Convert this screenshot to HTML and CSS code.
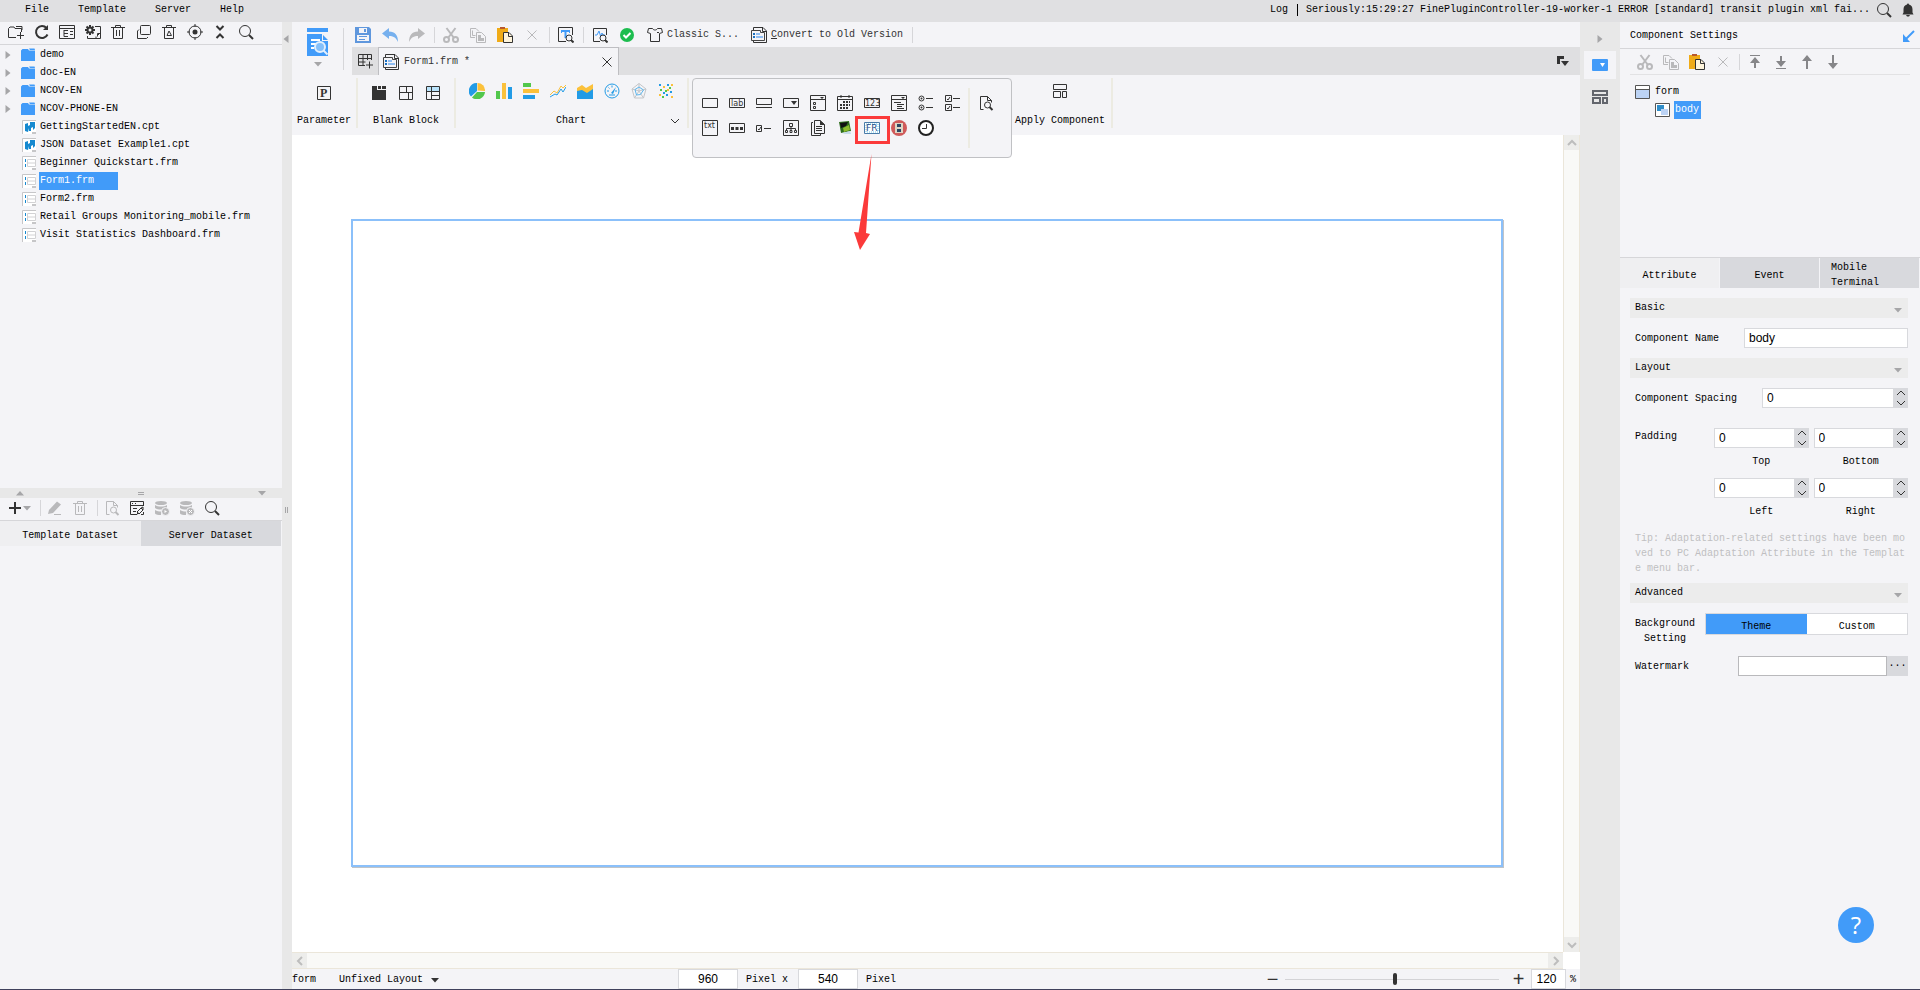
FILE: index.html
```html
<!DOCTYPE html>
<html lang="en">
<head>
    <meta charset="UTF-8">
    <meta name="viewport" content="width=device-width, initial-scale=1.0">
    <title>Form1.frm</title>
    <link rel="stylesheet" href="styles.css">
</head>
<body>
    <!-- icons -->
    <svg class="sprite" aria-hidden="true">
        <symbol id="folder-add" viewBox="0 0 16 16"><path d="M8 13.5H.5V4.500L2 3h4l1 1.500h6.500V8M8 2.500h6V6M9 11.500h7M12.500 8v7" class="ln"/></symbol>
        <symbol id="refresh" viewBox="0 0 16 16"><path d="M13.500 10.500A6 6 0 1 1 12.500 4" class="ln b"/><path d="M9 6h5V1z"/></symbol>
        <symbol id="rename" viewBox="0 0 16 16"><path d="M.5 1.500h15v13H.5zM.5 4.500h15M5 6v6.500M5 6.500h4M5 9.500h4M5 12.500h4M11 7.500h3M11 10.500h3" class="ln"/></symbol>
        <symbol id="gear-doc" viewBox="0 0 16 16"><circle cx="5" cy="6" r="2.500" class="ln b"/><path d="M5 1v2M5 9v2M0 6h2M8 6h2M1.500 2.500l1.500 1.500M8.500 2.500L7 4M1.500 9.500L3 8M8.500 9.500L7 8" class="ln b"/><path d="M10 2.500h5.500v12H2.500V12M10 14.500h1v-2M12.500 12.500v-3h3M12 12l3-3" class="ln"/></symbol>
        <symbol id="trash" viewBox="0 0 16 16"><path d="M1 3.500h14M5.500 3V1.500h5V3M3.500 4v10.500h9V4M6.500 6v6M9.500 6v6" class="ln"/></symbol>
        <symbol id="copy2" viewBox="0 0 16 16"><rect x="4.500" y="1.500" width="10" height="9" rx="1" class="ln"/><path d="M3 5.500L1.500 7v7.500h9L12 13" class="ln"/></symbol>
        <symbol id="recycle" viewBox="0 0 16 16"><path d="M1 3.500h14M5.500 3V1.500h5V3M3.500 4v10.500h9V4M6 11.500h4.500L8 7z" class="ln"/></symbol>
        <symbol id="target" viewBox="0 0 16 16"><circle cx="8" cy="8" r="6" class="ln"/><circle cx="8" cy="8" r="2.500"/><path d="M8 0v3M8 13v3M0 8h3M13 8h3" class="ln"/></symbol>
        <symbol id="collapse" viewBox="0 0 16 16"><path d="M4.500 2L8 5.500 11.500 2M4.500 14L8 10.500 11.500 14" class="ln b"/></symbol>
        <symbol id="search" viewBox="0 0 16 16"><circle cx="7" cy="7" r="5.500" class="ln"/><path d="M11 11l4 4" class="ln b"/></symbol>
        <symbol id="bell" viewBox="0 0 16 16"><path d="M8 1.500a1 1 0 0 1 1 1c2.500.5 3.500 2.500 3.500 5v3l1 2h-11l1-2v-3c0-2.500 1-4.500 3.500-5a1 1 0 0 1 1-1zM6 13h4l-1 1.500H7z"/></symbol>
        <symbol id="folder" viewBox="0 0 16 16"><path d="M1 3.500L2.500 2H8l1 1.500h6V14H1z" fill="#419bf9"/><path d="M9 1.500h5.500l.5 1.500h-5z" fill="#419bf9"/></symbol>
        <symbol id="cpt" viewBox="0 0 16 16"><path d="M1.500 15V1.500H15" fill="none" stroke="#c6c6c8"/><path d="M2 2h13v13H2z" fill="#fff"/><path d="M4 5l3-1v3l2-1V3h5v6l-2 2V8l-2 1v3H8V9l-1 4-3-1z" fill="#1589d0"/><path d="M11 13h4v2h-4z" fill="#c6c6c8"/></symbol>
        <symbol id="frm" viewBox="0 0 16 16"><path d="M1.500 15V1.500H15" fill="none" stroke="#c6c6c8"/><path d="M2 2h13v13H2z" fill="#fff"/><path d="M6.500 4.500h8v7h-8zM7 8h8" fill="none" stroke="#d2d2d4"/><path d="M4 4h1v3H4zM4 9h1v3H4z" fill="#1589d0"/><path d="M11 13h4v2h-4z" fill="#c6c6c8"/></symbol>
        <symbol id="plus" viewBox="0 0 16 16"><path d="M2 8h12M8 2v12" class="ln b"/></symbol>
        <symbol id="pencil" viewBox="0 0 16 16"><path d="M1 14l1-4 8-8.500 4 3L6 13zM7 14h7v1H7z"/></symbol>
        <symbol id="doc-search" viewBox="0 0 16 16"><path d="M5.500 14.500h-3v-13h7l4 4M9.500 1.500v4h4v2" class="ln"/><circle cx="9.500" cy="10" r="3" class="ln"/><path d="M11.500 12l3 3" class="ln b"/></symbol>
        <symbol id="db-edit" viewBox="0 0 16 16"><path d="M8 14.500H1.500v-13h13V6M1.500 5.500h13M4 8.500h4M4 11.500h3M3 3.500h1M6 3.500h1" class="ln"/><path d="M8 12l4-4 2 2-4 4zM12 8l2-1v3M8 14.500l1-2M14.500 12v2.500H12" class="ln"/></symbol>
        <symbol id="db" viewBox="0 0 16 16"><ellipse cx="7" cy="3" rx="6" ry="2"/><path d="M1 5c3 2 9 2 12 0v3c-3 2-9 2-12 0zM1 10c2 1.500 4 1.500 6 1.500V15c-3 0-5-.5-6-1.500z"/><circle cx="11.500" cy="11.500" r="4" stroke="#f4f4f7"/><path d="M10.500 10l2.500 1.500-2.500 1.500z" fill="#fff"/></symbol>
        <symbol id="db-x" viewBox="0 0 16 16"><ellipse cx="7" cy="3" rx="6" ry="2"/><path d="M1 5c3 2 9 2 12 0v3c-3 2-9 2-12 0zM1 10c2 1.500 4 1.500 6 1.500V15c-3 0-5-.5-6-1.500z"/><circle cx="11.500" cy="11.500" r="4" stroke="#f4f4f7"/><path d="M10 10l3 3M13 10l-3 3" stroke="#fff"/></symbol>
        <symbol id="save" viewBox="0 0 16 16"><path d="M0 0h14l2 2v14H0z" fill="#5f97dd"/><path d="M4 1h8v5H4z" fill="#f4f4f7"/><path d="M9 2h2v3H9zM3 9h10v1H3zM3 12h7v1H3z" fill="#5f97dd"/><path d="M2 8h12v6H2z" fill="#f4f4f7"/><path d="M4 9h8v1H4zM4 12h6v1H4z" fill="#5f97dd"/></symbol>
        <symbol id="undo" viewBox="0 0 16 16"><path d="M0 6.500L7 1v3.500c6 0 9 4 9 10.500-2-4.500-5-6-9-6V12z"/></symbol>
        <symbol id="redo" viewBox="0 0 16 16"><path d="M16 6.500L9 1v3.500C3 4.500 0 8.500 0 15c2-4.500 5-6 9-6v3z"/></symbol>
        <symbol id="cut" viewBox="0 0 16 16"><circle cx="3.500" cy="12.500" r="2.500" class="ln b"/><circle cx="12.500" cy="12.500" r="2.500" class="ln b"/><path d="M3.500 1L11 11M12.500 1L5 11" class="ln b"/></symbol>
        <symbol id="copy" viewBox="0 0 16 16"><path d="M5 10.500H.5V1.500H6l3 3M2.500 3.500v5h3" class="ln"/><path d="M6.500 5.500h5l4 4v6h-9z" class="ln"/><path d="M8 8h3v3h3v3H8z"/></symbol>
        <symbol id="paste" viewBox="0 0 16 16"><path d="M0 1h11v5H6v9H0z" fill="#f0ab17"/><path d="M3 0h5v2H3z" fill="#b9582e"/><path d="M6.500 5.500h5.500l3.500 3.500v6.500h-9z" fill="#fff5dc" stroke="#333"/><path d="M11.500 5.500v4h4" fill="none" stroke="#333"/></symbol>
        <symbol id="cross" viewBox="0 0 16 16"><path d="M3.500 3.500l9 9M12.500 3.500l-9 9" class="ln"/></symbol>
        <symbol id="text-search" viewBox="0 0 16 16"><path d="M8 14.500H.5V.5h14V8" class="ln"/><path d="M3 3h9v3h-1V5H8.500v6h-2V5H4v1H3z" fill="#419bf9"/><circle cx="11" cy="11" r="3" class="ln"/><path d="M13 13l2.500 2.500" class="ln b"/></symbol>
        <symbol id="pulse" viewBox="0 0 16 16"><path d="M8 14.500H1.500v-13h13V8" class="ln"/><path d="M3 8h2l2-4 1.500 5L10 6l1 2h2" fill="none" stroke="#419bf9"/><circle cx="11" cy="11" r="3" class="ln"/><path d="M13 13l2.500 2.500" class="ln b"/></symbol>
        <symbol id="check" viewBox="0 0 16 16"><circle cx="8" cy="8" r="7" fill="#1dbd4f"/><path d="M4.500 8l2.500 2.500L11.500 6" fill="none" stroke="#fff" stroke-width="2"/></symbol>
        <symbol id="shirt" viewBox="0 0 16 16"><path d="M5.500 1.500c1 2 4 2 5 0h4l1 4-3 1v8h-9v-8l-3-1 1-4zM10 5.500h2" class="ln"/></symbol>
        <symbol id="form-doc" viewBox="0 0 16 16"><path d="M2.500 3V.5H12l3.500 3.500v11.500H2.500V14M11.500.5v4h4" class="ln"/><path d="M.5 3.500h9v2h4v8H.5z" fill="#f4f4f7" stroke="#444"/><path d="M2 6h2v2H2zM2 9h2v2H2z" fill="#1a70c0"/><path d="M5 6h4v2H5zM5 9h7v2H5z" fill="#8fbdf2"/></symbol>
        <symbol id="grid-add" viewBox="0 0 16 16"><path d="M8 12.500H1.500v-11h13V7M1.500 5.500h13M1.500 9h7M6 1.500v11M10.500 1.500V7M9 12h7M12.500 8.500v7" class="ln"/></symbol>
        <symbol id="report" viewBox="0 0 22 28"><path d="M0 0h21v4H0zM0 6h15v7h6v15H0zM16 7l5 5h-5z" fill="#419bf9"/><path d="M4 11h9v2H4zM4 15h5v2H4zM4 19h3v2H4z" fill="#fff"/><circle cx="13" cy="19" r="5" fill="#85c0fa" stroke="#e2effd" stroke-width="2"/><path d="M16.500 22.500l4 4" stroke="#e2effd" stroke-width="2"/></symbol>
        <symbol id="param" viewBox="0 0 16 16"><path d="M1.500 1.500h13v13h-13z" class="ln"/><text x="4" y="12" font-family="Liberation Serif, serif" font-size="12" font-weight="bold">P</text></symbol>
        <symbol id="block1" viewBox="0 0 16 16"><path d="M1 1h5v4h9v10H1zM7 1h3v3H7zM11 1h4v3h-4z"/></symbol>
        <symbol id="block2" viewBox="0 0 16 16"><path d="M1.500 1.500h13v13h-13zM1.500 7.500h13M8.500 1.500v6M10.500 7.500v7" class="ln"/></symbol>
        <symbol id="block3" viewBox="0 0 16 16"><path d="M2 2h12v4H2z" fill="#b9e3fb"/><path d="M1.500 1.500h13v13h-13zM1.500 6.500h13M6.500 1.500v13M6.500 10.500h8" class="ln"/></symbol>
        <symbol id="pie" viewBox="0 0 16 16"><path d="M8 8V0a8 8 0 0 0-6 13.500z" fill="#229be6"/><path d="M8.500 7.500V0a7.500 7.500 0 0 1 7.500 8z" fill="#fbc13b"/><path d="M8 9h8a8 8 0 0 1-13 5.500z" fill="#52c74c"/></symbol>
        <symbol id="bars" viewBox="0 0 16 16"><path d="M0 8h4v8H0z" fill="#52c74c"/><path d="M6 0h4v16H6z" fill="#fbc13b"/><path d="M12 4h4v12h-4z" fill="#229be6"/></symbol>
        <symbol id="hbars" viewBox="0 0 16 16"><path d="M0 0h8v4H0z" fill="#52c74c"/><path d="M0 6h16v4H0z" fill="#fbc13b"/><path d="M0 12h12v4H0z" fill="#229be6"/></symbol>
        <symbol id="line" viewBox="0 0 16 16"><path d="M0 12l4-4 3 2 4-7 2 2 3-3" fill="none" stroke="#fbc13b"/><path d="M0 14l5-3 2 1 4-6 2 3 3-5" fill="none" stroke="#229be6"/></symbol>
        <symbol id="area" viewBox="0 0 16 16"><path d="M0 5l5-3 4 3 7-4v10H0z" fill="#fbc13b"/><path d="M0 8l5-1 5 3 6-4v10H0z" fill="#229be6"/></symbol>
        <symbol id="gauge" viewBox="0 0 16 16"><circle cx="8" cy="8" r="7" fill="none" stroke="#229be6"/><path d="M8 2.500v2M3 8h2M11 8h2M4.500 4.500l1 1M5 12h6" stroke="#229be6"/><path d="M7 10l5-6-3 7z" fill="#229be6"/></symbol>
        <symbol id="radar" viewBox="0 0 16 16"><path d="M8 .5l7 5.500-2.500 9h-9L1 6zM8 .5V8l7-2M8 8l4.500 7M8 8l-4.500 7M8 8L1 6" fill="none" stroke="#c4c6c9"/><path d="M8 4l4.500 3-3 4.500-4 .5L4 6.500z" fill="none" stroke="#5ab6ee"/></symbol>
        <symbol id="scatter" viewBox="0 0 16 16"><path d="M1 1h2v2H1zM5 9h2v2H5zM9 1h2v2H9zM12 8h2v2h-2zM8 11h2v2H8z" fill="#229be6"/><path d="M5 3h2v2H5zM13 1h2v2h-2zM9 6h2v2H9zM1 11h2v2H1zM13 13h2v2h-2z" fill="#fbc13b"/><path d="M2 6h2v2H2zM11 4h2v2h-2zM4 13h2v2H4zM7 7h2v2H7z" fill="#52c74c"/></symbol>
        <symbol id="w-text" viewBox="0 0 16 16"><path d="M.5 3.500h15v9H.5z" class="ln"/></symbol>
        <symbol id="w-label" viewBox="0 0 16 16"><path d="M.5 3.500h15v9H.5z" class="ln"/><text x="2" y="11" font-family="DejaVu Sans, sans-serif" font-size="8">lab</text></symbol>
        <symbol id="w-button" viewBox="0 0 16 16"><path d="M.5 3.500h15v6H.5zM0 12.500h16" class="ln"/></symbol>
        <symbol id="w-combo" viewBox="0 0 16 16"><path d="M.5 3.500h15v9H.5z" class="ln"/><path d="M8 6h6l-3 4z"/></symbol>
        <symbol id="w-check-combo" viewBox="0 0 16 16"><path d="M.5.5h15v15H.5zM.5 4.500h15M3.500 7.500h2v2h-2zM3.500 11.500h2v2h-2z" class="ln"/><path d="M10 2h4l-2 2z"/></symbol>
        <symbol id="w-date" viewBox="0 0 16 16"><path d="M.5 1.500h15v14H.5zM.5 4.500h15M4 0v3M12 0v3" class="ln"/><path d="M3 10h10M3 13h9M6 7h7" class="ln b" stroke-dasharray="2 1"/></symbol>
        <symbol id="w-number" viewBox="0 0 16 16"><path d="M.5 3.500h15v9H.5z" class="ln"/><text x="1" y="11" font-family="DejaVu Sans, sans-serif" font-size="8">123</text></symbol>
        <symbol id="w-tree-combo" viewBox="0 0 16 16"><path d="M.5.500h15v15H.5zM.5 4.500h15M3 7.500h7M6 9.500h7M6 11.500h5M6 13.500h7" class="ln"/><path d="M10 2h4l-2 2z"/></symbol>
        <symbol id="w-radio" viewBox="0 0 16 16"><circle cx="3.500" cy="3.500" r="2.500" class="ln"/><circle cx="3.500" cy="12.500" r="2.500" class="ln"/><circle cx="3.500" cy="3.500" r="1"/><circle cx="3.500" cy="12.500" r="1"/><path d="M8 3.500h7M8 12.500h7" class="ln"/></symbol>
        <symbol id="w-checks" viewBox="0 0 16 16"><path d="M.5.500h6v6h-6zM.5 9.500h6v6h-6zM2 4l1 1 2-3M2 13l1 1 2-3M8 3.500h7M8 12.500h7" class="ln"/></symbol>
        <symbol id="w-area" viewBox="0 0 16 16"><path d="M.5.500h15v15H.5z" class="ln"/><text x="2" y="8" font-family="DejaVu Sans, sans-serif" font-size="8">txt</text></symbol>
        <symbol id="w-pass" viewBox="0 0 16 16"><path d="M.5 3.500h15v9H.5z" class="ln"/><path d="M2 7h3v3H2zM6.500 7h3v3h-3zM11 7h3v3h-3z"/></symbol>
        <symbol id="w-check" viewBox="0 0 16 16"><path d="M.5 5.500h5v6h-5zM2 9l1 1 2-3M8 8.500h7" class="ln"/></symbol>
        <symbol id="w-tree" viewBox="0 0 16 16"><path d="M.5.500h15v15H.5zM6.500 3.500h3v3h-3zM8 6.500v4M3.500 11V8.500h9V11M2.500 10.500h2v2h-2zM7 10.500h2v2H7zM11.500 10.500h2v2h-2z" class="ln"/></symbol>
        <symbol id="w-copy" viewBox="0 0 16 16"><path d="M3 2.500H1.500v13h9V14M4.500.500H10l4.500 4v9h-10zM6 6.500h6M6 8.500h6M6 10.500h6" class="ln"/><path d="M10 0l5 5h-5z"/></symbol>
        <symbol id="w-image" viewBox="0 0 16 16"><path d="M2 2l10-1 2 10-10 2z" fill="#2e6e1d"/><path d="M3 3l8-1-2 4-5 2z" fill="#111"/><path d="M6 8l6-3 1 5-6 2z" fill="#8dbb2c"/><path d="M5 13l8-2 1 3H8z" fill="#c6dbe8"/></symbol>
        <symbol id="w-fr" viewBox="0 0 16 16"><path d="M.5 2.500h15v11H.5z" fill="#fff" stroke="#497ba8"/><path d="M2 4h12v8H2z" fill="none" stroke="#6fc4e4" stroke-dasharray="1 1"/><text x="2" y="11" font-family="DejaVu Sans, sans-serif" font-size="9" fill="#184a86">FR</text></symbol>
        <symbol id="w-media" viewBox="0 0 16 16"><circle cx="8" cy="8" r="8" fill="#cf5b5b"/><path d="M4 3h8v10H4z" fill="#ddd6c4"/><path d="M6 4h4v3H6zM6 9h4v3H6z" fill="#2c4664"/></symbol>
        <symbol id="w-clock" viewBox="0 0 16 16"><circle cx="8" cy="8" r="7" fill="#fff" stroke="#222" stroke-width="2"/><path d="M8.500 4v4.500H4" class="ln"/></symbol>
        <symbol id="layout" viewBox="0 0 16 16"><path d="M1.500 1.500h13v5h-13zM1.500 8.500h7v6h-7zM10.500 8.500h4v6h-4z" class="ln"/></symbol>
        <symbol id="layout-bold" viewBox="0 0 16 16"><path d="M1 2h14v4H1zM1 9h7v5H1zM11 9h4v5h-4z" class="ln b"/></symbol>
        <symbol id="blue-tab" viewBox="0 0 16 16"><rect y="2" width="16" height="12" rx="1" fill="#419bf9"/><path d="M8 6h5l-2.500 4z" fill="#fff"/></symbol>
        <symbol id="tabs-list" viewBox="0 0 16 16"><path d="M2 3h7v3H5v5H2z"/><path d="M6 8h8l-4 5z"/></symbol>
        <symbol id="dock" viewBox="0 0 16 16"><path d="M14 3l-9 9" stroke="#419bf9" stroke-width="2"/><path d="M3 6v8h7z" fill="#419bf9"/></symbol>
        <symbol id="to-top" viewBox="0 0 16 16"><path d="M3 1h10v1H3zM8 3l5 6H9v5H7V9H3z"/></symbol>
        <symbol id="to-bottom" viewBox="0 0 16 16"><path d="M3 14h10v1H3zM8 13l5-6H9V2H7v5H3z"/></symbol>
        <symbol id="up" viewBox="0 0 16 16"><path d="M8 1l5 6H9v8H7V7H3z"/></symbol>
        <symbol id="down" viewBox="0 0 16 16"><path d="M8 15l5-6H9V1H7v8H3z"/></symbol>
        <symbol id="form" viewBox="0 0 16 16"><path d="M.5 1.500h14v13H.5z" fill="#bcd3f5" stroke="#555"/><path d="M1 2h13v3H1z" fill="#fff"/><path d="M1 5.500h13" stroke="#555"/></symbol>
        <symbol id="body" viewBox="0 0 16 16"><path d="M.5 1.500h14v13H.5z" fill="#fff" stroke="#555"/><path d="M2 3h7v6H2z" fill="#2f8dc9"/><path d="M6 7h7v6H6z" fill="#bcd3f5"/></symbol>
        <symbol id="chev-down" viewBox="0 0 10 10"><path d="M1 3l4 4 4-4" class="ln"/></symbol>
        <symbol id="chev-up" viewBox="0 0 10 10"><path d="M1 7l4-4 4 4" class="ln"/></symbol>
        <symbol id="bar-down" viewBox="0 0 10 10"><path d="M1 3l4 4 4-4" class="ln b"/></symbol>
        <symbol id="bar-up" viewBox="0 0 10 10"><path d="M1 7l4-4 4 4" class="ln b"/></symbol>
        <symbol id="bar-left" viewBox="0 0 10 10"><path d="M7 1L3 5l4 4" class="ln b"/></symbol>
        <symbol id="bar-right" viewBox="0 0 10 10"><path d="M3 1l4 4-4 4" class="ln b"/></symbol>
        <symbol id="tri-down" viewBox="0 0 8 8"><path d="M0 2h8L4 6.500z"/></symbol>
        <symbol id="tri-up" viewBox="0 0 8 8"><path d="M0 6.500h8L4 2z"/></symbol>
        <symbol id="tri-left" viewBox="0 0 8 8"><path d="M6.500 0v8L1.500 4z"/></symbol>
        <symbol id="tri-right" viewBox="0 0 8 8"><path d="M1.500 0v8l5-4z"/></symbol>
    </svg>

    <!-- menu bar -->
    <header class="menubar">
        <nav>
            <a href="#">File</a>
            <a href="#">Template</a>
            <a href="#">Server</a>
            <a href="#">Help</a>
        </nav>
        <div class="log">
            <span class="log-name">Log</span>
            <span class="log-msg">Seriously:15:29:27 FinePluginController-19-worker-1 ERROR [standard] transit plugin xml fai...</span>
            <button aria-label="Search"><svg><use href="#search"/></svg></button>
            <button aria-label="Messages"><svg><use href="#bell"/></svg></button>
        </div>
    </header>

    <div class="main">
        <!-- templates and datasets -->
        <aside class="left">
            <div class="tools file-tools">
                <button aria-label="New folder"><svg><use href="#folder-add"/></svg></button>
                <button aria-label="Refresh"><svg><use href="#refresh"/></svg></button>
                <button aria-label="Rename"><svg><use href="#rename"/></svg></button>
                <button aria-label="Manage"><svg><use href="#gear-doc"/></svg></button>
                <button aria-label="Delete"><svg><use href="#trash"/></svg></button>
                <button aria-label="Copy"><svg><use href="#copy2"/></svg></button>
                <button aria-label="Recycle bin"><svg><use href="#recycle"/></svg></button>
                <button aria-label="Locate"><svg><use href="#target"/></svg></button>
                <button aria-label="Collapse"><svg><use href="#collapse"/></svg></button>
                <button aria-label="Search"><svg><use href="#search"/></svg></button>
            </div>
            <ul class="tree">
                <li class="dir"><svg class="tri"><use href="#tri-right"/></svg><svg><use href="#folder"/></svg><span>demo</span></li>
                <li class="dir"><svg class="tri"><use href="#tri-right"/></svg><svg><use href="#folder"/></svg><span>doc-EN</span></li>
                <li class="dir"><svg class="tri"><use href="#tri-right"/></svg><svg><use href="#folder"/></svg><span>NCOV-EN</span></li>
                <li class="dir"><svg class="tri"><use href="#tri-right"/></svg><svg><use href="#folder"/></svg><span>NCOV-PHONE-EN</span></li>
                <li><svg><use href="#cpt"/></svg><span>GettingStartedEN.cpt</span></li>
                <li><svg><use href="#cpt"/></svg><span>JSON Dataset Example1.cpt</span></li>
                <li><svg><use href="#frm"/></svg><span>Beginner Quickstart.frm</span></li>
                <li><svg><use href="#frm"/></svg><span class="on">Form1.frm</span></li>
                <li><svg><use href="#frm"/></svg><span>Form2.frm</span></li>
                <li><svg><use href="#frm"/></svg><span>Retail Groups Monitoring_mobile.frm</span></li>
                <li><svg><use href="#frm"/></svg><span>Visit Statistics Dashboard.frm</span></li>
            </ul>
            <div class="splitter">
                <svg class="tri"><use href="#tri-up"/></svg>
                <i></i>
                <svg class="tri"><use href="#tri-down"/></svg>
            </div>
            <div class="tools data-tools">
                <button class="add" aria-label="Add dataset"><svg><use href="#plus"/></svg><svg class="tri"><use href="#tri-down"/></svg></button>
                <hr>
                <button class="off" aria-label="Edit"><svg><use href="#pencil"/></svg></button>
                <button class="off" aria-label="Delete"><svg><use href="#trash"/></svg></button>
                <hr>
                <button class="off" aria-label="Preview"><svg><use href="#doc-search"/></svg></button>
                <button aria-label="Connection"><svg><use href="#db-edit"/></svg></button>
                <button class="off" aria-label="Run"><svg><use href="#db"/></svg></button>
                <button class="off" aria-label="Stop"><svg><use href="#db-x"/></svg></button>
                <button aria-label="Search"><svg><use href="#search"/></svg></button>
            </div>
            <div class="data-tabs">
                <button class="cur">Template Dataset</button>
                <button>Server Dataset</button>
            </div>
        </aside>
        <div class="left-bar"><svg class="tri"><use href="#tri-left"/></svg><i></i></div>

        <!-- designer -->
        <section class="center">
            <div class="top">
                <button class="preview" aria-label="Preview"><svg class="report"><use href="#report"/></svg><svg class="tri"><use href="#tri-down"/></svg></button>
                <div class="top-right">
                    <div class="tools edit-tools">
                        <button aria-label="Save"><svg><use href="#save"/></svg></button>
                        <button class="undo" aria-label="Undo"><svg><use href="#undo"/></svg></button>
                        <button class="off" aria-label="Redo"><svg><use href="#redo"/></svg></button>
                        <hr>
                        <button class="off" aria-label="Cut"><svg><use href="#cut"/></svg></button>
                        <button class="off" aria-label="Copy"><svg><use href="#copy"/></svg></button>
                        <button aria-label="Paste"><svg><use href="#paste"/></svg></button>
                        <button class="off" aria-label="Delete"><svg><use href="#cross"/></svg></button>
                        <hr>
                        <button aria-label="Find text"><svg><use href="#text-search"/></svg></button>
                        <hr>
                        <button aria-label="Monitor"><svg><use href="#pulse"/></svg></button>
                        <button aria-label="Check"><svg><use href="#check"/></svg></button>
                        <button class="txt"><svg><use href="#shirt"/></svg>Classic S...</button>
                        <button class="txt"><svg><use href="#form-doc"/></svg><span><u>C</u>onvert to Old Version</span></button>
                        <hr>
                    </div>
                    <div class="file-tabs">
                        <button class="new" aria-label="New template"><svg><use href="#grid-add"/></svg></button>
                        <div class="file-tab"><svg><use href="#form-doc"/></svg><span>Form1.frm *</span><button aria-label="Close"><svg><use href="#cross"/></svg></button></div>
                        <button class="list" aria-label="Tab list"><svg><use href="#tabs-list"/></svg></button>
                    </div>
                </div>
            </div>
            <div class="ribbon">
                <div class="group g-param">
                    <div class="icons"><button aria-label="Parameter pane"><svg><use href="#param"/></svg></button></div>
                    <p>Parameter</p>
                </div>
                <div class="group g-block">
                    <div class="icons">
                        <button aria-label="Tab block"><svg><use href="#block1"/></svg></button>
                        <button aria-label="Absolute block"><svg><use href="#block2"/></svg></button>
                        <button aria-label="Report block"><svg><use href="#block3"/></svg></button>
                    </div>
                    <p>Blank Block</p>
                </div>
                <div class="group g-chart">
                    <div class="icons">
                        <button aria-label="Pie"><svg><use href="#pie"/></svg></button>
                        <button aria-label="Column"><svg><use href="#bars"/></svg></button>
                        <button aria-label="Bar"><svg><use href="#hbars"/></svg></button>
                        <button aria-label="Line"><svg><use href="#line"/></svg></button>
                        <button aria-label="Area"><svg><use href="#area"/></svg></button>
                        <button aria-label="Gauge"><svg><use href="#gauge"/></svg></button>
                        <button aria-label="Radar"><svg><use href="#radar"/></svg></button>
                        <button aria-label="Scatter"><svg><use href="#scatter"/></svg></button>
                    </div>
                    <p>Chart</p>
                    <svg class="more"><use href="#chev-down"/></svg>
                </div>
                <!-- widget pop-up -->
                <div class="slot">
                    <div class="popup">
                        <div class="widgets">
                            <button aria-label="Text"><svg><use href="#w-text"/></svg></button>
                            <button aria-label="Label"><svg><use href="#w-label"/></svg></button>
                            <button aria-label="Button"><svg><use href="#w-button"/></svg></button>
                            <button aria-label="Drop-down"><svg><use href="#w-combo"/></svg></button>
                            <button aria-label="Drop-down check box"><svg><use href="#w-check-combo"/></svg></button>
                            <button aria-label="Date"><svg><use href="#w-date"/></svg></button>
                            <button aria-label="Number"><svg><use href="#w-number"/></svg></button>
                            <button aria-label="Drop-down tree"><svg><use href="#w-tree-combo"/></svg></button>
                            <button aria-label="Radio group"><svg><use href="#w-radio"/></svg></button>
                            <button aria-label="Check box group"><svg><use href="#w-checks"/></svg></button>
                            <button aria-label="Text area"><svg><use href="#w-area"/></svg></button>
                            <button aria-label="Password"><svg><use href="#w-pass"/></svg></button>
                            <button aria-label="Check box"><svg><use href="#w-check"/></svg></button>
                            <button aria-label="Tree"><svg><use href="#w-tree"/></svg></button>
                            <button aria-label="File"><svg><use href="#w-copy"/></svg></button>
                            <button aria-label="Image"><svg><use href="#w-image"/></svg></button>
                            <button class="marked" aria-label="FR"><svg><use href="#w-fr"/></svg></button>
                            <button aria-label="Media"><svg><use href="#w-media"/></svg></button>
                            <button aria-label="Clock"><svg><use href="#w-clock"/></svg></button>
                        </div>
                        <button class="q" aria-label="Query"><svg><use href="#doc-search"/></svg></button>
                        <svg class="arrow" viewBox="0 0 20 96"><path d="M18.500 0L13 79l4 1L7 96 1 78l4.500.5z"/></svg>
                    </div>
                </div>
                <div class="group g-apply">
                    <div class="icons"><button aria-label="Component"><svg><use href="#layout"/></svg></button></div>
                    <p>Apply Component</p>
                </div>
            </div>
            <div class="work">
                <div class="canvas"><div class="form-body"></div></div>
                <div class="vscroll"><button aria-label="Up"><svg><use href="#bar-up"/></svg></button><button aria-label="Down"><svg><use href="#bar-down"/></svg></button></div>
                <div class="hscroll"><button aria-label="Left"><svg><use href="#bar-left"/></svg></button><button aria-label="Right"><svg><use href="#bar-right"/></svg></button></div>
            </div>
            <footer class="status">
                <span>form</span>
                <button class="layout-btn">Unfixed Layout<svg class="tri"><use href="#tri-down"/></svg></button>
                <div class="size">
                    <input type="text" id="pw" value="960"><label for="pw">Pixel x</label>
                    <input type="text" id="ph" value="540"><label for="ph">Pixel</label>
                </div>
                <div class="zoom">
                    <button aria-label="Zoom out">&minus;</button>
                    <input type="range" min="0" max="240" value="124" aria-label="Zoom">
                    <button aria-label="Zoom in">+</button>
                    <input type="text" id="zv" value="120"><label for="zv">%</label>
                </div>
            </footer>
        </section>

        <!-- side strip -->
        <div class="strip">
            <svg class="tri"><use href="#tri-right"/></svg>
            <button class="cur" aria-label="Component settings"><svg><use href="#blue-tab"/></svg></button>
            <button aria-label="Component library"><svg><use href="#layout-bold"/></svg></button>
        </div>

        <!-- component settings -->
        <aside class="right">
            <h2>Component Settings<svg><use href="#dock"/></svg></h2>
            <div class="tools comp-tools">
                <button class="off" aria-label="Cut"><svg><use href="#cut"/></svg></button>
                <button class="off" aria-label="Copy"><svg><use href="#copy"/></svg></button>
                <button aria-label="Paste"><svg><use href="#paste"/></svg></button>
                <button class="off" aria-label="Delete"><svg><use href="#cross"/></svg></button>
                <hr>
                <button class="mid" aria-label="To top"><svg><use href="#to-top"/></svg></button>
                <button class="mid" aria-label="To bottom"><svg><use href="#to-bottom"/></svg></button>
                <button class="mid" aria-label="Up"><svg><use href="#up"/></svg></button>
                <button class="mid" aria-label="Down"><svg><use href="#down"/></svg></button>
            </div>
            <ul class="comp-tree">
                <li><svg><use href="#form"/></svg><span>form</span></li>
                <li class="sub"><svg><use href="#body"/></svg><span class="on">body</span></li>
            </ul>
            <div class="attr-tabs">
                <button class="cur">Attribute</button>
                <button>Event</button>
                <button class="two">Mobile<br>Terminal</button>
            </div>
            <form class="attrs">
                <h3>Basic<svg class="tri"><use href="#tri-down"/></svg></h3>
                <div class="row"><label for="cname">Component Name</label><input class="name" type="text" id="cname" value="body"></div>
                <h3>Layout<svg class="tri"><use href="#tri-down"/></svg></h3>
                <div class="row"><label for="cspace">Component Spacing</label><div class="spin space"><input type="text" id="cspace" value="0"><span><svg><use href="#chev-up"/></svg><svg><use href="#chev-down"/></svg></span></div></div>
                <div class="row pad">
                    <span>Padding</span>
                    <div class="pad-grid">
                        <div><div class="spin"><input type="text" id="ptop" value="0"><span><svg><use href="#chev-up"/></svg><svg><use href="#chev-down"/></svg></span></div><label for="ptop">Top</label></div>
                        <div><div class="spin"><input type="text" id="pbottom" value="0"><span><svg><use href="#chev-up"/></svg><svg><use href="#chev-down"/></svg></span></div><label for="pbottom">Bottom</label></div>
                        <div><div class="spin"><input type="text" id="pleft" value="0"><span><svg><use href="#chev-up"/></svg><svg><use href="#chev-down"/></svg></span></div><label for="pleft">Left</label></div>
                        <div><div class="spin"><input type="text" id="pright" value="0"><span><svg><use href="#chev-up"/></svg><svg><use href="#chev-down"/></svg></span></div><label for="pright">Right</label></div>
                    </div>
                </div>
                <p class="tip">Tip: Adaptation-related settings have been moved to PC Adaptation Attribute in the Template menu bar.</p>
                <h3>Advanced<svg class="tri"><use href="#tri-down"/></svg></h3>
                <div class="row bg"><span>Background<br>Setting</span><div class="toggle"><button type="button" class="cur">Theme</button><button type="button">Custom</button></div></div>
                <div class="row mark"><label for="wm">Watermark</label><div class="pick"><input type="text" id="wm"><button type="button" aria-label="Choose">&middot;&middot;&middot;</button></div></div>
            </form>
            <button class="help">?</button>
        </aside>
    </div>
</body>
</html>
```
FILE: styles.css
```css
*{
    margin: 0;
    padding: 0;
    box-sizing: border-box;
}
body{
    height: 100vh;
    display: flex;
    flex-direction: column;
    overflow: hidden;
    border-bottom: 1px solid #3f415c;
    background-color: #f4f4f7;
    color: #000;
    font: 10px/14px "Liberation Mono", monospace;
}
ul{
    list-style: none;
}
a{
    color: #000;
    text-decoration: none;
}
button,input{
    font: inherit;
    color: inherit;
    border: none;
    background: none;
    border-radius: 0;
    outline: none;
}
svg{
    display: block;
    flex: none;
    width: 16px;
    height: 16px;
    fill: currentColor;
}
.sprite{
    display: none;
}
.ln{
    fill: none;
    stroke: currentColor;
}
.b{
    stroke-width: 2;
}
.tri{
    width: 8px;
    height: 8px;
    color: #a6a6a8;
}

/* menu bar */
.menubar{
    display: flex;
    justify-content: space-between;
    align-items: center;
    height: 22px;
    padding: 0 4px 2px 25px;
    background-color: #e0e0e2;
}
.menubar nav{
    display: flex;
    gap: 29px;
}
.log{
    display: flex;
    align-items: center;
    white-space: nowrap;
}
.log-name{
    padding-right: 9px;
    border-right: 1px solid #000;
    line-height: 12px;
}
.log-msg{
    padding: 0 4px 0 8px;
}
.log button{
    margin-left: 2px;
    color: #333;
}
.log button + button{
    margin-left: 8px;
}

.main{
    flex: 1;
    display: flex;
    min-height: 0;
}
.tools{
    display: flex;
    align-items: center;
    color: #333;
}
.tools hr{
    width: 1px;
    height: 16px;
    border: none;
    background-color: #d6d6d9;
}
.off{
    color: #b9b9bb;
}
.mid{
    color: #868689;
}

/* left panel */
.left{
    flex: none;
    width: 282px;
    display: flex;
    flex-direction: column;
}
.file-tools{
    justify-content: space-between;
    height: 23px;
    padding: 0 28px 2px 8px;
    border-bottom: 1px solid #d6d6d9;
}
.tree{
    height: 443px;
    padding-top: 1px;
}
.tree li{
    display: flex;
    align-items: center;
    height: 18px;
    padding-left: 21px;
}
.tree .dir{
    padding-left: 4px;
}
.dir .tri{
    margin-right: 8px;
}
.tree span{
    line-height: 18px;
    padding: 0 1px;
    margin-left: 2px;
}
.tree .dir span{
    margin-left: 3px;
}
.tree .on{
    width: 79px;
}
.on{
    background-color: #419bf9;
    color: #fff;
}
.splitter{
    display: flex;
    justify-content: space-between;
    align-items: center;
    height: 10px;
    padding: 0 16px;
    background-color: #e8e8e8;
}
.splitter i{
    width: 6px;
    height: 3px;
    border: solid #a6a6a8;
    border-width: 1px 0;
}
.data-tools{
    height: 23px;
    padding: 0 7px 2px;
    gap: 9px;
    border-bottom: 1px solid #d6d6d9;
}
.data-tools .add{
    display: flex;
    align-items: center;
}
.data-tools hr{
    margin: 0 -3px 0 0;
}
.data-tabs{
    display: grid;
    grid-template-columns: 1fr 1fr;
    padding-right: 1px;
}
.data-tabs button{
    height: 25px;
    padding-top: 5px;
    background-color: #d8d9dd;
}
.data-tabs .cur,.attr-tabs .cur{
    background-color: #efeff1;
}
.left-bar{
    flex: none;
    width: 10px;
    display: flex;
    flex-direction: column;
    align-items: center;
    padding: 13px 2px 0 0;
    background-color: #e8e8e8;
}
.left-bar i{
    width: 3px;
    height: 6px;
    margin-top: 464px;
    border: solid #a6a6a8;
    border-width: 0 1px;
}

/* designer */
.center{
    flex: 1;
    min-width: 0;
    display: flex;
    flex-direction: column;
}
.top{
    display: flex;
}
.preview{
    flex: none;
    display: flex;
    flex-direction: column;
    align-items: center;
    gap: 4px;
    width: 52px;
    height: 42px;
    margin: 6px 8px 0 0;
    border-right: 1px solid #d6d6d9;
}
.report{
    width: 22px;
    height: 28px;
}
.top-right{
    flex: 1;
}
.edit-tools{
    height: 25px;
    padding-left: 3px;
    gap: 11px;
}
.edit-tools hr{
    margin: 0 -3px 0 -2px;
}
.undo{
    color: #76b0ee;
}
.txt{
    display: flex;
    align-items: center;
    gap: 4px;
    margin-left: 1px;
    white-space: nowrap;
}
.file-tabs{
    display: flex;
    background-color: #dfdfe1;
    color: #333;
}
.file-tabs .new{
    width: 26px;
    height: 28px;
    padding-left: 5px;
}
.file-tab{
    display: flex;
    align-items: center;
    width: 241px;
    height: 28px;
    padding: 0 3px 0 4px;
    border: solid #bebec2;
    border-width: 1px 1px 0 1px;
    background-color: #f4f4f7;
}
.file-tab span{
    flex: 1;
    margin-left: 5px;
}
.list{
    margin-left: auto;
    padding-right: 9px;
}
.ribbon{
    display: flex;
    height: 60px;
    padding-top: 3px;
}
.group{
    display: flex;
    flex-direction: column;
    align-items: center;
    justify-content: space-between;
    height: 50px;
    border-right: 2px solid #ecebe2;
    position: relative;
    color: #333;
}
.group p{
    color: #000;
    line-height: 14px;
}
.icons{
    display: flex;
    gap: 11px;
    margin-top: 7px;
}
.g-param{
    width: 66px;
}
.g-block{
    width: 98px;
}
.g-chart{
    width: 233px;
    padding-right: 1px;
}
.g-chart .icons{
    margin-top: 5px;
}
.g-apply{
    width: 100px;
    padding-right: 4px;
}
.g-apply .icons{
    margin-top: 5px;
}
.more{
    position: absolute;
    right: 7px;
    bottom: 2px;
    width: 10px;
    height: 10px;
}
.slot{
    position: relative;
    width: 324px;
}
.popup{
    position: absolute;
    z-index: 2;
    left: 3px;
    top: 0;
    display: flex;
    width: 320px;
    height: 80px;
    padding: 9px;
    border: 1px solid #c0c1c4;
    border-radius: 4px;
    background-color: #f4f4f7;
    color: #333;
}
.widgets{
    display: grid;
    grid-template-columns: repeat(10,16px);
    grid-auto-rows: 16px;
    gap: 9px 11px;
    width: 268px;
    padding-top: 7px;
    border-right: 2px solid #ecebe2;
}
.marked{
    position: relative;
}
.marked::after{
    content: "";
    position: absolute;
    left: -9px;
    right: -10px;
    top: -4px;
    bottom: -8px;
    border: 3px solid #fb3a3a;
}
.q{
    align-self: flex-start;
    margin: 7px 0 0 8px;
}
.arrow{
    position: absolute;
    left: 160px;
    top: 75px;
    width: 20px;
    height: 96px;
    fill: #fb3a3a;
}
.work{
    flex: 1;
    display: grid;
    grid-template-columns: 1fr 17px;
    grid-template-rows: 1fr 17px;
    min-height: 0;
    background-color: #fff;
}
.canvas{
    display: flex;
    padding: 84px 60px 85px 59px;
}
.form-body{
    flex: 1;
    border: 2px solid #8bc0fa;
    box-shadow: 1px 1px 0 #c0c4c8;
}
.vscroll,.hscroll{
    display: flex;
    justify-content: space-between;
    background-color: #f9f9f7;
    border: 1px solid #ebe6da;
    color: #bdbdbd;
}
.vscroll{
    flex-direction: column;
    border-width: 0 1px;
}
.hscroll{
    border-width: 1px 0;
}
.vscroll button,.hscroll button{
    display: grid;
    place-items: center;
    width: 15px;
    height: 15px;
    background-color: #ededeb;
}
.vscroll svg,.hscroll svg{
    width: 10px;
    height: 10px;
}
.status{
    display: flex;
    align-items: center;
    height: 20px;
}
.status span,.status label,.layout-btn{
    padding-top: 2px;
}
.layout-btn{
    display: flex;
    align-items: center;
    gap: 8px;
    width: 339px;
    margin-left: 23px;
}
.layout-btn .tri{
    color: #333;
}
.size,.zoom{
    display: flex;
    align-items: center;
    gap: 8px;
}
.size label{
    padding-right: 2px;
}
.size input,.zoom input[type=text]{
    width: 60px;
    height: 20px;
    border: 1px solid #d8d9dd;
    background-color: #fff;
    text-align: center;
    font: 12px/16px "Liberation Sans", sans-serif;
}
.zoom{
    margin-left: auto;
    gap: 6px;
    padding-right: 4px;
}
.zoom input[type=text]{
    width: 35px;
    padding-right: 4px;
}
.zoom label{
    margin-left: -2px;
}
.zoom button{
    width: 13px;
    font: 20px/20px "Liberation Sans", sans-serif;
    color: #333;
}
.zoom input[type=range]{
    appearance: none;
    width: 214px;
    height: 12px;
    margin-right: 7px;
    background: linear-gradient(#d3d3d6,#d3d3d6) center/100% 1px no-repeat;
}
.zoom input[type=range]::-webkit-slider-thumb{
    appearance: none;
    width: 4px;
    height: 12px;
    border-radius: 2px;
    background-color: #333;
}

/* side strip */
.strip{
    flex: none;
    width: 40px;
    display: flex;
    flex-direction: column;
    align-items: center;
    padding-top: 13px;
    background-color: #e8e8e8;
    color: #63666d;
}
.strip button{
    width: 32px;
    height: 28px;
    padding-left: 8px;
    margin-bottom: 4px;
}
.strip .cur{
    margin-top: 8px;
    background-color: #f4f4f7;
}

/* component settings */
.right{
    flex: none;
    width: 300px;
    position: relative;
}
.right h2{
    display: flex;
    justify-content: space-between;
    align-items: center;
    height: 27px;
    padding: 1px 4px 0 10px;
    border-bottom: 1px solid #d6d6d9;
    font-size: 10px;
    font-weight: normal;
}
.comp-tools{
    height: 26px;
    gap: 10px;
    margin: 0 10px;
    padding-left: 7px;
    border-bottom: 1px solid #e2e2e4;
}
.comp-tools hr{
    margin: 0 -3px 0 -2px;
}
.comp-tree{
    height: 182px;
    padding: 8px 15px;
}
.comp-tree li{
    display: flex;
    gap: 3px;
    height: 18px;
    align-items: center;
}
.comp-tree .sub{
    padding-left: 20px;
}
.comp-tree span{
    padding: 0 2px 0 1px;
    line-height: 18px;
}
.attr-tabs{
    display: grid;
    grid-template-columns: repeat(3,1fr);
    gap: 1px;
    border-top: 1px solid #d6d6d9;
    padding-right: 1px;
}
.attr-tabs button{
    height: 30px;
    padding-top: 6px;
    background-color: #d8d9dd;
}
.attr-tabs .two{
    padding: 2px 0 0 11px;
    line-height: 15px;
    text-align: left;
}
.attrs{
    padding: 10px 12px 0 10px;
}
.attrs h3{
    display: flex;
    justify-content: space-between;
    height: 20px;
    padding: 3px 6px 0 5px;
    background-color: #ececec;
    font-size: 10px;
    font-weight: normal;
}
.attrs h3 .tri{
    margin-top: 5px;
}
.row{
    display: flex;
    justify-content: space-between;
    align-items: center;
    padding: 10px 0 10px 5px;
}
.row label{
    padding-top: 2px;
}
.row input{
    height: 20px;
    padding: 0 4px;
    border: 1px solid #d8d9dd;
    background-color: #fff;
    font: 12px/18px "Liberation Sans", sans-serif;
}
.row .name{
    width: 164px;
}
.spin{
    display: flex;
}
.spin input{
    flex: 1;
    min-width: 0;
}
.spin span{
    width: 14px;
    padding-left: 2px;
    background-color: #d8d9dd;
    color: #333;
}
.spin svg{
    width: 10px;
    height: 10px;
}
.space{
    width: 146px;
}
.pad{
    align-items: flex-start;
    padding-bottom: 0;
}
.pad > span{
    padding-top: 2px;
}
.pad-grid{
    display: grid;
    grid-template-columns: repeat(2,minmax(0,1fr));
    gap: 10px 5px;
    width: 194px;
}
.pad-grid label{
    display: block;
    height: 20px;
    padding: 0;
    line-height: 28px;
    text-align: center;
}
.tip{
    width: 278px;
    padding: 13px 0 7px 5px;
    color: #bfbfc1;
    line-height: 15px;
    word-break: break-all;
}
.bg{
    align-items: flex-start;
    text-align: center;
    line-height: 15px;
    padding-bottom: 0;
}
.bg > span{
    padding-top: 3px;
}
.toggle{
    display: grid;
    grid-template-columns: 1fr 1fr;
    width: 203px;
    border: 1px solid #d8d9dd;
}
.toggle button{
    height: 20px;
    padding-top: 4px;
    background-color: #fff;
}
.toggle .cur{
    background-color: #419bf9;
}
.pick{
    display: flex;
    width: 170px;
}
.pick input{
    flex: 1;
    min-width: 0;
    border-color: #b9b9bc;
}
.pick button{
    width: 21px;
    background-color: #d8d9dd;
}
.help{
    position: absolute;
    right: 46px;
    bottom: 46px;
    width: 36px;
    height: 36px;
    border-radius: 50%;
    background-color: #419bf9;
    color: #fff;
    font: 24px/36px "Open Sans", sans-serif;
}
```
